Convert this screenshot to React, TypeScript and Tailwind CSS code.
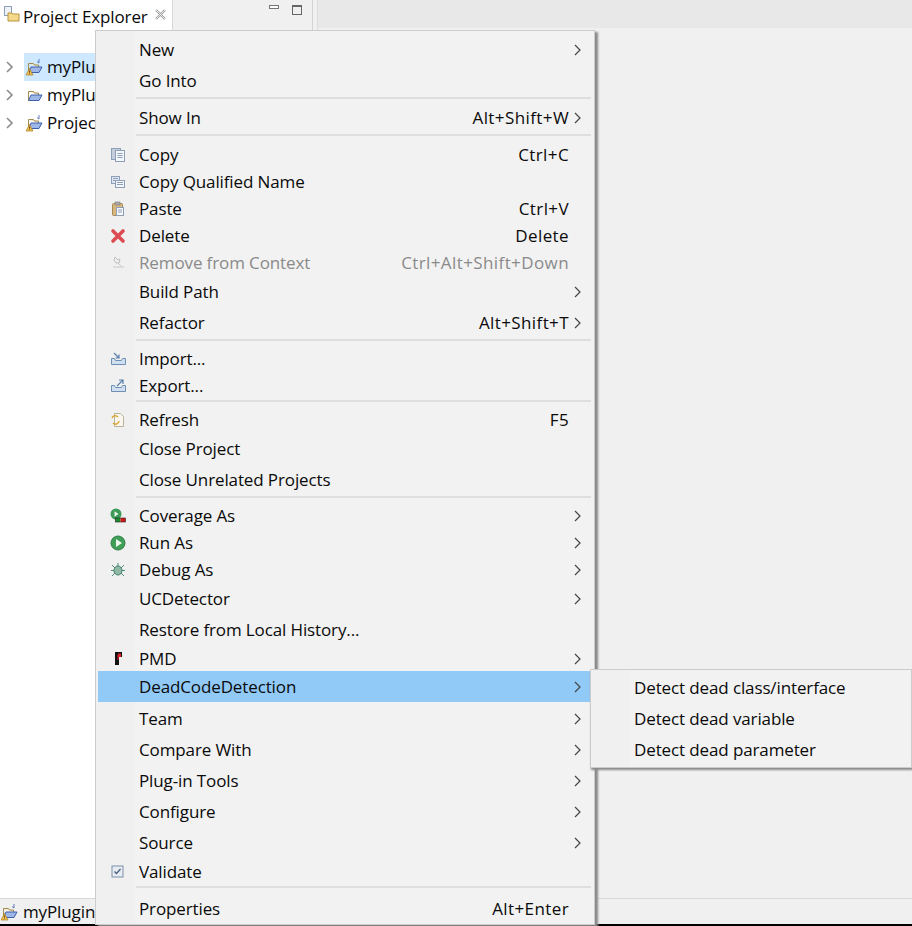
import type { ReactNode } from "react";

type Row =
  | { sep: true; h: number; line: number }
  | {
      sep?: false;
      label: string;
      h: number;
      key?: string;
      arrow?: boolean;
      icon?: ReactNode;
      disabled?: boolean;
      active?: boolean;
      nudge?: number;
    };

const Folder = ({ warn }: { warn?: boolean }) => (
  <svg width="18" height="18" viewBox="0 0 18 18" className="shrink-0">
    <path d="M2.5 5.5h5l1 1.5h4v2" fill="#f6e7b8" stroke="#a08a50" />
    <path d="M2.5 14.5V5.5" stroke="#a08a50" />
    <path d="M2.5 14.5l2.5-5.5h11l-3 5.5z" fill="#9db8e8" stroke="#3f5fa8" />
    {warn ? (
      <>
        <path d="M13 5V1M13 5l-2-1.5" stroke="#3f5fa8" fill="none" strokeWidth="0.8" />
        <path d="M3.5 10.5l3.5 6.5H0z" fill="#f3c34c" stroke="#a87a20" strokeWidth="0.7" />
        <path d="M3.5 12.5v2.2M3.5 15.4v.7" stroke="#333" strokeWidth="0.8" />
      </>
    ) : null}
  </svg>
);

const Doc = ({ x, y, fill = "#f3f6fb" }: { x: number; y: number; fill?: string }) => (
  <>
    <rect x={x} y={y} width="9" height="11" fill={fill} stroke="#8e9fb8" />
    <path
      d={`M${x + 2} ${y + 3}h5M${x + 2} ${y + 5}h5M${x + 2} ${y + 7}h5`}
      stroke="#8e9fb8"
    />
  </>
);

const Ico = ({ children }: { children: ReactNode }) => (
  <svg width="16" height="16" viewBox="0 0 16 16">
    {children}
  </svg>
);

const icons: Record<string, ReactNode> = {
  copy: (
    <Ico>
      <rect x="1.5" y="1.5" width="9" height="11" fill="#c4cedc" stroke="#8e9fb8" />
      <Doc x={5.5} y={3.5} />
    </Ico>
  ),
  qualified: (
    <Ico>
      <rect x="1.5" y="2.5" width="8" height="7" fill="#dfe6f0" stroke="#8e9fb8" />
      <path d="M3 4.5h5M3 6.5h5" stroke="#8e9fb8" />
      <rect x="5.5" y="6.5" width="9" height="7" fill="#f3f6fb" stroke="#8e9fb8" />
      <path d="M7 8.5h6M7 10.5h6" stroke="#8e9fb8" />
    </Ico>
  ),
  paste: (
    <Ico>
      <rect x="2.5" y="2.5" width="10" height="12" rx="1" fill="#d8b77c" stroke="#a58a58" />
      <rect x="5" y="1" width="5" height="3" fill="#a9a9a9" stroke="#7e7e7e" strokeWidth="0.6" />
      <rect x="6.5" y="6.5" width="7" height="8" fill="#f7f9fc" stroke="#8e9fb8" />
      <path d="M8 9h4M8 11h4" stroke="#8e9fb8" />
    </Ico>
  ),
  del: (
    <Ico>
      <path d="M3 3l10 10M13 3L3 13" stroke="#dc4b52" strokeWidth="3.6" strokeLinecap="round" />
    </Ico>
  ),
  remove: (
    <Ico>
      <path d="M5 2l3 3 2-1-1 4H6L4 5z" fill="none" stroke="#bdbdbd" />
      <path d="M3 12h11" stroke="#c8c8c8" />
      <path d="M8 8l3 3" stroke="#c8c8c8" />
    </Ico>
  ),
  importIcon: (
    <Ico>
      <path d="M1.5 7.5v6h14v-6h-3l-1 2h-6l-1-2z" fill="#cfdff0" stroke="#6f8fb5" />
      <path d="M4 2l5 5M9 3.5V7H5.5" fill="none" stroke="#5a7fae" strokeWidth="1.2" />
    </Ico>
  ),
  exportIcon: (
    <Ico>
      <path d="M1.5 7.5v6h14v-6h-3l-1 2h-6l-1-2z" fill="#cfdff0" stroke="#6f8fb5" />
      <path d="M7 8l6-6M9 2h4v4" fill="none" stroke="#5a7fae" strokeWidth="1.2" />
    </Ico>
  ),
  refresh: (
    <Ico>
      <path d="M4.5 1.5h6l3 3v10h-9z" fill="#f8f6ee" stroke="#b9b39c" />
      <path d="M2 6a3.5 3.5 0 0 1 6-1M9 9a3.5 3.5 0 0 1-6 2" fill="none" stroke="#d9a93a" strokeWidth="1.6" />
    </Ico>
  ),
  coverage: (
    <Ico>
      <circle cx="6" cy="6" r="5.5" fill="#3e9a58" />
      <path d="M4.5 3.2l4 2.8-4 2.8z" fill="#eef7ee" />
      <rect x="5.5" y="10" width="5" height="4" fill="#1d8a2c" />
      <rect x="10.5" y="10" width="5" height="4" fill="#d11818" />
      <rect x="5.5" y="10" width="10" height="4" fill="none" stroke="#222" strokeWidth="0.6" />
    </Ico>
  ),
  run: (
    <Ico>
      <circle cx="8" cy="8" r="7" fill="#3f9f56" stroke="#2f7f45" />
      <path d="M6 4l6 4-6 4z" fill="#f0f7ee" />
    </Ico>
  ),
  debug: (
    <Ico>
      <path
        d="M2 3l3 3M14 3l-3 3M1 8.500h3M12 8.500h3M2 14l3-3M14 14l-3-3M8 1v3"
        stroke="#4f8a7c"
        strokeWidth="1"
      />
      <ellipse cx="8" cy="8.500" rx="4" ry="4.500" fill="#8fb9a4" stroke="#3f7f6a" />
    </Ico>
  ),
  pmd: (
    <Ico>
      <path d="M5 1h7v5H9v8H5z" fill="#111" />
      <path d="M8.500 2.500h2.500v3.500H8.500v3H7.500V4z" fill="#e3202a" />
    </Ico>
  ),
  check: (
    <Ico>
      <rect x="2" y="2" width="11" height="11" fill="#e7ecf3" stroke="#7d8fa8" />
      <path d="M4.500 7.500l2 2 4-4.500" fill="none" stroke="#4a5f7e" strokeWidth="1.300" />
    </Ico>
  ),
};

const rows: Row[] = [
  { label: "New", h: 31, arrow: true },
  { label: "Go Into", h: 31 },
  { sep: true, h: 6, line: 1 },
  { label: "Show In", h: 31, key: "Alt+Shift+W", arrow: true },
  { sep: true, h: 8, line: 1 },
  { label: "Copy", h: 27, key: "Ctrl+C", icon: icons.copy },
  { label: "Copy Qualified Name", h: 27, icon: icons.qualified },
  { label: "Paste", h: 27, key: "Ctrl+V", icon: icons.paste },
  { label: "Delete", h: 27, key: "Delete", icon: icons.del },
  { label: "Remove from Context", h: 27, key: "Ctrl+Alt+Shift+Down", icon: icons.remove, disabled: true },
  { label: "Build Path", h: 31, arrow: true },
  { label: "Refactor", h: 31, key: "Alt+Shift+T", arrow: true },
  { sep: true, h: 7, line: 1 },
  { label: "Import...", h: 27, icon: icons.importIcon },
  { label: "Export...", h: 27, icon: icons.exportIcon },
  { sep: true, h: 7, line: 1 },
  { label: "Refresh", h: 27, key: "F5", icon: icons.refresh },
  { label: "Close Project", h: 31 },
  { label: "Close Unrelated Projects", h: 31 },
  { sep: true, h: 7, line: 1 },
  { label: "Coverage As", h: 27, arrow: true, icon: icons.coverage },
  { label: "Run As", h: 27, arrow: true, icon: icons.run },
  { label: "Debug As", h: 27, arrow: true, icon: icons.debug },
  { label: "UCDetector", h: 31, arrow: true },
  { label: "Restore from Local History...", h: 31 },
  { label: "PMD", h: 26, arrow: true, icon: icons.pmd, nudge: 2 },
  { label: "DeadCodeDetection", h: 31, arrow: true, active: true, nudge: 1 },
  { label: "Team", h: 31, arrow: true, nudge: 2 },
  { label: "Compare With", h: 31, arrow: true, nudge: 2 },
  { label: "Plug-in Tools", h: 31, arrow: true, nudge: 2 },
  { label: "Configure", h: 31, arrow: true, nudge: 2 },
  { label: "Source", h: 31, arrow: true, nudge: 2 },
  { label: "Validate", h: 27, icon: icons.check, nudge: 2 },
  { sep: true, h: 9, line: 2 },
  { label: "Properties", h: 31, key: "Alt+Enter" },
];

const Chevron = () => (
  <svg width="8" height="12" viewBox="0 0 8 12">
    <path d="M1 1l5 5-5 5" fill="none" stroke="#444" strokeWidth="1.200" />
  </svg>
);

function MenuRow({ row }: { row: Row }) {
  if (row.sep) {
    return (
      <div className="flex flex-col" style={{ height: row.h, paddingTop: row.line }}>
        <div className="ml-[38px] mr-[1px] h-[2px] bg-[#dedede]" />
      </div>
    );
  }
  return (
    <div
      className={`flex items-center ${row.active ? "bg-[#91c9f7]" : ""} ${
        row.disabled ? "text-[#8a8a8a]" : "text-[#0a0a0a]"
      }`}
      style={{ height: row.h, paddingTop: row.nudge }}
    >
      <div className="flex w-[41px] shrink-0 justify-center pl-[1px] pr-[2px]">{row.icon}</div>
      <span className="flex-1 whitespace-nowrap">{row.label}</span>
      {row.key ? <span className="whitespace-nowrap tracking-[0.4px]">{row.key}</span> : null}
      <div className="flex w-[23px] shrink-0 justify-end pr-[10px]">{row.arrow ? <Chevron /> : null}</div>
    </div>
  );
}

const TreeRow = ({ label, warn, active }: { label: string; warn?: boolean; active?: boolean }) => (
  <div className="flex h-[28px] items-center">
    <svg width="8" height="12" viewBox="0 0 8 12" className="ml-[6px] mr-[10px] shrink-0">
      <path d="M1 1l5 5-5 5" fill="none" stroke="#8c8c8c" strokeWidth="1.600" />
    </svg>
    <div className={`flex h-[28px] flex-1 items-center gap-[3px] pl-[2px] ${active ? "bg-[#cde8ff]" : ""}`}>
      <Folder warn={warn} />
      <span className="whitespace-nowrap">{label}</span>
    </div>
  </div>
);

export default function App() {
  return (
    <div
      className="relative flex h-[926px] w-[912px] flex-col overflow-hidden bg-[#f0f0f0] text-[17px] tracking-[-0.12px] text-[#0a0a0a]"
      style={{ fontFamily: '"Open Sans", sans-serif' }}
    >
      <div className="flex min-h-0 flex-1">
        <div className="flex w-[313px] flex-col border-r border-[#d4d4d4] bg-white">
          <div className="flex h-[31px] shrink-0 border-b border-[#d0d0d0] bg-[#f0f0f0]">
            <div className="-mb-[1px] flex w-[173px] items-center border-r border-[#d8d8d8] bg-white pl-[3px] pt-[3px]">
              <svg width="18" height="18" viewBox="0 0 18 18" className="shrink-0 -translate-y-[3px]">
                <rect x="1.500" y="1.500" width="7" height="9" fill="#eef1f6" stroke="#8e9fb8" />
                <path d="M5 8h4l1 1h6v7H5z" fill="#f4d98a" stroke="#b8923e" />
              </svg>
              <span className="ml-[2px] whitespace-nowrap">Project Explorer</span>
              <svg width="11" height="11" viewBox="0 0 11 11" className="ml-[7px] shrink-0 -translate-y-[3px]">
                <path d="M1 1l9 9M10 1l-9 9" stroke="#9a9a9a" strokeWidth="2.200" />
                <path d="M1 1l9 9M10 1l-9 9" stroke="#fff" strokeWidth="0.800" />
              </svg>
            </div>
            <div className="flex flex-1 items-start justify-end gap-[13px] pr-[10px] pt-[5px]">
              <div className="h-[4px] w-[10px] border border-[#777] bg-white" />
              <div className="h-[10px] w-[10px] border border-[#666] border-t-2" />
            </div>
          </div>
          <div className="overflow-hidden pt-[22px]">
            <TreeRow label="myPlugin" warn active />
            <TreeRow label="myPlugin" />
            <TreeRow label="Project" warn />
          </div>
        </div>
        <div className="w-[4px]" />
        <div className="flex-1 border-l border-[#dcdcdc]">
          <div className="h-[28px] bg-[#e8e8e8]" />
        </div>
      </div>
      <div className="flex h-[26px] items-center border-t border-[#d8d8d8] bg-[#f0f0f0] pl-[1px]">
        <Folder warn />
        <span className="ml-[4px] whitespace-nowrap">myPlugin</span>
      </div>
      <div className="h-[2px] bg-black" />

      <div className="absolute left-[95px] top-[30px] h-[895px] w-[500px] border border-[#cccccc] bg-[linear-gradient(90deg,#f0f0f0_39px,#f2f2f2_39px)] px-[2px] pt-[3px] shadow-[3px_2px_2px_#8a8a8a]">
        {rows.map((row, i) => (
          <MenuRow key={i} row={row} />
        ))}
      </div>

      <div className="absolute left-[590px] top-[669px] w-[322px] border border-[#cccccc] bg-[linear-gradient(90deg,#f0f0f0_38px,#f2f2f2_38px)] py-[2px] shadow-[1px_2px_2px_#8a8a8a]">
        {["Detect dead class/interface", "Detect dead variable", "Detect dead parameter"].map((label) => (
          <div key={label} className="flex h-[31px] items-center pl-[43px]">
            <span className="whitespace-nowrap">{label}</span>
          </div>
        ))}
      </div>
    </div>
  );
}
